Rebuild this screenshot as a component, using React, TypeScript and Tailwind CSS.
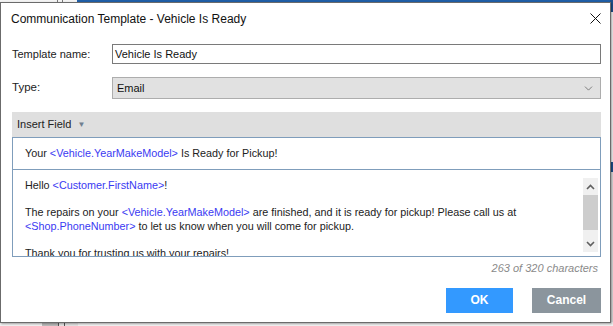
import { ChevronDown } from "lucide-react"

const sans = { fontFamily: '"Liberation Sans", Arial, sans-serif' }

function Field({ children }: { children: string }) {
  return <span className="text-[#3a3af2]">{children}</span>
}

function CloseIcon() {
  return (
    <svg width="11" height="11" viewBox="0 0 11 11" className="block">
      <path d="M0.5 0.5 L10.5 10.5 M10.5 0.5 L0.5 10.5" stroke="#111" strokeWidth="1" />
    </svg>
  )
}

function Scrollbar() {
  return (
    <div className="absolute right-[2px] top-[8px] bottom-[4px] w-[15px] bg-[#f0f0f0] flex flex-col">
      <div className="h-[17px] flex items-center justify-center">
        <svg width="9" height="6" viewBox="0 0 9 6">
          <path d="M1 5 L4.5 1.5 L8 5" stroke="#606060" strokeWidth="1.6" fill="none" />
        </svg>
      </div>
      <div className="h-[35px] bg-[#cdcdcd]" />
      <div className="flex-1" />
      <div className="h-[17px] flex items-center justify-center">
        <svg width="9" height="6" viewBox="0 0 9 6">
          <path d="M1 1 L4.5 4.5 L8 1" stroke="#606060" strokeWidth="1.6" fill="none" />
        </svg>
      </div>
    </div>
  )
}

export default function App() {
  return (
    <div className="relative w-[613px] h-[326px] overflow-hidden bg-[#e8e8e8]" style={sans}>
      {/* bits of the window behind the dialog */}
      <div className="absolute left-0 top-0 w-[613px] h-[3px] flex">
        <div className="w-[57px] bg-[#f3f3f3]" />
        <div className="w-[1px] bg-[#777]" />
        <div className="w-[4px] bg-[#f3f3f3]" />
        <div className="w-[1px] bg-[#777]" />
        <div className="w-[14px] bg-[#f3f3f3]" />
        <div className="flex-1 bg-[#1f5ea6]" />
      </div>
      <div className="absolute right-0 top-0 w-[3px] h-[326px] flex flex-col">
        <div className="h-[12px] bg-[#1c4f8c]" />
        <div className="h-[150px] bg-[#f3f3f3]" />
        <div className="h-[10px] bg-[#1c4f8c]" />
        <div className="flex-1 bg-[#dcdcdc]" />
      </div>
      <div className="absolute left-0 bottom-0 w-[613px] h-[4px] flex">
        <div className="w-[42px] bg-[#f3f3f3]" />
        <div className="w-[16px] bg-[#bcbcbc]" />
        <div className="w-[1px] bg-[#555]" />
        <div className="w-[5px] bg-[#e4e4e4]" />
        <div className="w-[1px] bg-[#555]" />
        <div className="w-[13px] bg-[#e4e4e4]" />
        <div className="flex-1 bg-[#f3f3f3]" />
      </div>

      {/* dialog */}
      <div className="absolute left-0 top-[2px] w-[611px] h-[321px] bg-white border border-[#6b6b6b] shadow-[1px_1px_2px_rgba(0,0,0,0.35)] flex flex-col">
        <div className="h-[31px] flex items-center justify-between pl-[10px] pr-[9px]">
          <span className="text-[12px] text-[#111]">Communication Template - Vehicle Is Ready</span>
          <CloseIcon />
        </div>

        <div className="pl-[11px] pr-[9px] flex flex-col">
          <div className="mt-[10px] flex items-center h-[20px]">
            <div className="w-[100px] text-[11px] text-[#222]">Template name:</div>
            <div className="flex-1 h-[20px] border border-[#7a7a7a] flex items-center pl-[2px] text-[11px] text-[#111]">
              Vehicle Is Ready
            </div>
          </div>

          <div className="mt-[13px] flex items-center h-[22px]">
            <div className="w-[100px] text-[11.5px] text-[#222]">Type:</div>
            <div className="flex-1 h-[22px] border border-[#adadad] bg-[#e1e1e1] flex items-center justify-between pl-[4px] pr-[5px] text-[11px] text-[#111]">
              <span>Email</span>
              <ChevronDown className="w-[13px] h-[13px] text-[#555]" strokeWidth={1.3} />
            </div>
          </div>

          <div className="mt-[13px] h-[25px] bg-[#dfdfdf] flex items-center pl-[5px] text-[11px] text-[#222]">
            Insert Field
            <span className="ml-[6px] text-[8px] text-[#6f7f90]">▼</span>
          </div>

          <div className="h-[33px] border border-[#7f9dbb] flex items-center pl-[12px] text-[10.8px] text-[#222]">
            <span>
              Your <Field>&lt;Vehicle.YearMakeModel&gt;</Field> Is Ready for Pickup!
            </span>
          </div>

          <div className="relative h-[87px] border border-t-0 border-[#7f9dbb] overflow-hidden pl-[12px] pr-[24px] pt-[9px] text-[10.8px] leading-[13.6px] text-[#222]">
            <div>
              Hello <Field>&lt;Customer.FirstName&gt;</Field>!
            </div>
            <div className="h-[13.6px]" />
            <div>
              The repairs on your <Field>&lt;Vehicle.YearMakeModel&gt;</Field> are finished, and it is ready for pickup! Please call us at{" "}
              <Field>&lt;Shop.PhoneNumber&gt;</Field> to let us know when you will come for pickup.
            </div>
            <div className="h-[13.6px]" />
            <div>Thank you for trusting us with your repairs!</div>
            <Scrollbar />
          </div>

          <div className="mt-[3px] text-right pr-[3px] text-[11px] italic text-[#8a8a8a]">263 of 320 characters</div>

          <div className="mt-[11px] flex justify-end gap-[19px]">
            <button className="w-[67px] h-[25px] bg-[#3399ff] text-white text-[12px] font-bold">OK</button>
            <button className="w-[69px] h-[25px] bg-[#8b959d] text-white text-[12px] font-bold">Cancel</button>
          </div>
        </div>
      </div>
    </div>
  )
}
